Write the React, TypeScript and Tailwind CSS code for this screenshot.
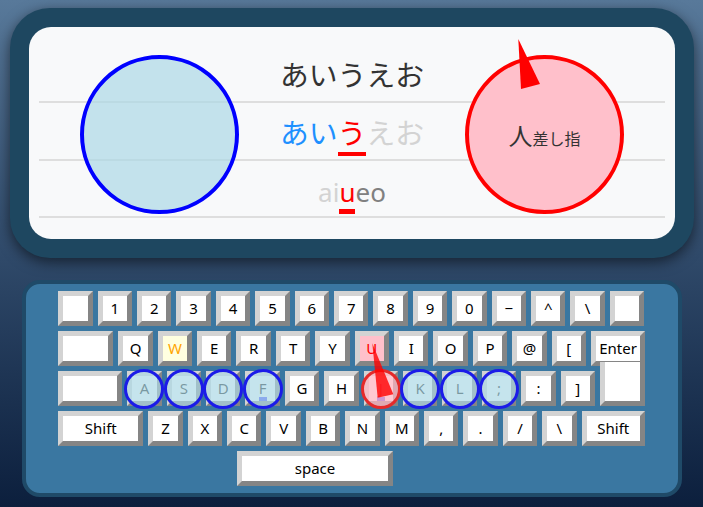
import React from 'react';

type KeyDef = {
  label?: string;
  w?: string;
  face?: string;
  text?: string;
  ring?: 'blue' | 'red';
  bump?: boolean;
};

const row1: KeyDef[] = [
  {}, { label: '1' }, { label: '2' }, { label: '3' }, { label: '4' }, { label: '5' }, { label: '6' },
  { label: '7' }, { label: '8' }, { label: '9' }, { label: '0' }, { label: '−' }, { label: '^' }, { label: '\\' }, {},
];

const row2: KeyDef[] = [
  { w: 'w-[55px]' },
  { label: 'Q' },
  { label: 'W', face: 'bg-[#ffffe0]', text: 'text-[#ffa500]' },
  { label: 'E' }, { label: 'R' }, { label: 'T' }, { label: 'Y' },
  { label: 'U', face: 'bg-[#ffc0cb]', text: 'text-[#ff0000]' },
  { label: 'I' }, { label: 'O' }, { label: 'P' }, { label: '@' }, { label: '[' },
];

const row3: KeyDef[] = [
  { w: 'w-[64px]' },
  { label: 'A', ring: 'blue' },
  { label: 'S', ring: 'blue' },
  { label: 'D', ring: 'blue' },
  { label: 'F', ring: 'blue', bump: true },
  { label: 'G' }, { label: 'H' },
  { label: 'J', ring: 'red', bump: true, text: 'text-[#cc0000]' },
  { label: 'K', ring: 'blue' },
  { label: 'L', ring: 'blue' },
  { label: ';', ring: 'blue' },
  { label: ':' }, { label: ']' },
];

const row4: KeyDef[] = [
  { label: 'Shift', w: 'w-[85px]' },
  { label: 'Z' }, { label: 'X' }, { label: 'C' }, { label: 'V' }, { label: 'B' }, { label: 'N' },
  { label: 'M' }, { label: ',' }, { label: '.' }, { label: '/' }, { label: '\\' },
  { label: 'Shift', w: 'w-[63.3px]' },
];

const bevel =
  'border-[5px] border-t-[#d3d3d3] border-l-[#d3d3d3] border-r-[#858585] border-b-[#858585]';

function Key({ k }: { k: KeyDef }) {
  return (
    <div
      className={`relative h-[35px] shrink-0 ${k.w ?? 'w-[34.4px]'} ${bevel} ${k.face ?? 'bg-white'} ${k.text ?? 'text-black'} flex items-center justify-center text-[15px] leading-none`}
    >
      {k.label}
      {k.bump && <span className="absolute bottom-0 left-1/2 -translate-x-1/2 w-[8px] h-[4px] bg-[#4040ff]" />}
      {k.ring === 'blue' && (
        <span className="absolute left-1/2 top-1/2 -translate-x-1/2 -translate-y-1/2 w-[40px] h-[40px] rounded-full border-[3px] border-[#1b1be8] bg-[#add8e6]/70" />
      )}
      {k.ring === 'red' && (
        <span className="absolute left-1/2 top-1/2 -translate-x-1/2 -translate-y-1/2 w-[40px] h-[40px] rounded-full border-[3px] border-[#e52a2a] bg-[#ffb6c1]/75" />
      )}
    </div>
  );
}

function Row({ keys }: { keys: KeyDef[] }) {
  return (
    <div className="flex gap-[5px]">
      {keys.map((k, i) => (
        <Key key={i} k={k} />
      ))}
    </div>
  );
}

export default function App() {
  return (
    <div className="w-[703px] h-[507px] overflow-hidden bg-linear-to-b from-[#58799a] to-[#0c1f3d] font-['Noto_Sans',sans-serif]">
      {/* display panel */}
      <div className="ml-[10px] mt-[8px] w-[684px] h-[250px] rounded-[40px] bg-[#1e4760] p-[19px] shadow-[0_4px_14px_rgba(0,0,0,0.55)]">
        <div className="relative h-full rounded-[22px] bg-[#f8f9fa] px-[10px] pt-[19px] font-['Noto_Sans_CJK_JP',sans-serif]">
          <div className="h-[57px] pt-[2px] border-b-2 border-[#dedede] flex items-center justify-center">
            <span className="text-[28.8px] leading-none text-[#333]">あいうえお</span>
          </div>
          <div className="h-[58px] pt-[3px] border-b-2 border-[#dedede] flex items-center justify-center">
            <span className="text-[28.8px] leading-none">
              <span className="text-[#1e90ff]">あい</span>
              <span className="relative inline-block text-[#ff0000]">
                う
                <span className="absolute left-0 right-0 top-[34px] h-[4px] bg-[#ff0000]" />
              </span>
              <span className="text-[#d3d3d3]">えお</span>
            </span>
          </div>
          <div className="h-[57px] pt-[6px] border-b-2 border-[#dedede] flex items-center justify-center font-['Noto_Sans',sans-serif]">
            <span className="text-[26px] leading-none">
              <span className="text-[#d3d3d3]">ai</span>
              <span className="relative inline-block text-[#ff0000]">
                u
                <span className="absolute left-0 right-0 top-[30px] h-[5px] bg-[#ff0000]" />
              </span>
              <span className="text-[#808080]">eo</span>
            </span>
          </div>

          {/* finger circles */}
          <div className="absolute left-[51px] top-[28px] w-[159px] h-[159px] rounded-full border-4 border-[#0000ff] bg-[#add8e6]/70" />
          <div className="absolute left-[436px] top-[28px] w-[159px] h-[159px] rounded-full border-4 border-[#ff0000] bg-[#ffc0cb] flex items-center justify-center text-[#333]">
            <span className="flex items-baseline">
              <span className="text-[24px]">人</span>
              <span className="text-[16px]">差し指</span>
            </span>
          </div>
          <svg className="absolute inset-0 w-full h-full pointer-events-none" viewBox="0 0 646 212">
            <polygon points="489.3,12 492,62 511,57" fill="#ff0000" />
          </svg>
        </div>
      </div>

      {/* keyboard */}
      <div className="relative mt-[22px] ml-[22px] w-[660px] h-[217px] rounded-[18px] border-4 border-[#1f4a68] bg-[#3a77a1] pt-[7px] pl-[32.3px]">
        <div className="flex flex-col gap-[5px]">
          <Row keys={row1} />
          <div className="flex gap-[5px]">
            {row2.map((k, i) => (
              <Key key={i} k={k} />
            ))}
            <div className="relative w-[54px] h-[35px] shrink-0">
              <div className={`h-full w-full ${bevel} bg-white flex items-center justify-center text-[15px] leading-none text-black`}>
                Enter
              </div>
              <div className="absolute right-0 top-[30.5px] w-[44.7px] h-[44.5px] border-[5px] border-t-0 border-l-[#d3d3d3] border-r-[#858585] border-b-[#858585] bg-white" />
            </div>
          </div>
          <Row keys={row3} />
          <Row keys={row4} />
          <div className="flex">
            <div className={`ml-[178.7px] w-[156px] h-[35px] ${bevel} bg-white flex items-center justify-center text-[15px] leading-none text-black`}>
              space
            </div>
          </div>
        </div>
        <svg className="absolute inset-0 w-full h-full pointer-events-none" viewBox="0 0 652 209">
          <polygon points="346.3,59.3 351.7,113.7 367.3,110.3" fill="#ff0000" fillOpacity="0.8" />
        </svg>
      </div>
    </div>
  );
}
